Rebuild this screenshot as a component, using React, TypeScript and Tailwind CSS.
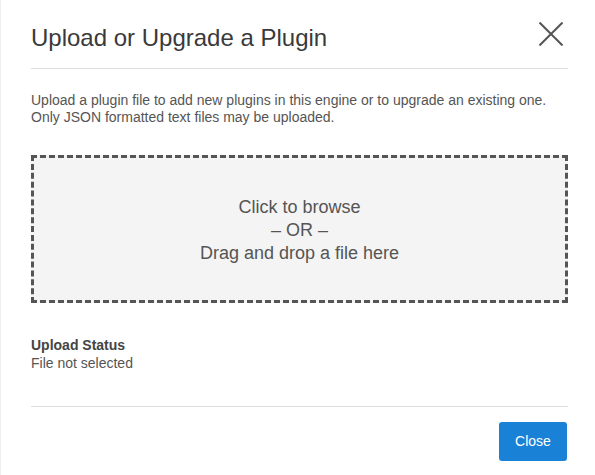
export default function App() {
  return (
    <div className="h-[475px] w-full border-l border-[#eeeeee] bg-white pl-[30px] pr-[27px] font-['Liberation_Sans',Arial,sans-serif]">
      {/* header */}
      <div className="flex items-start justify-between border-b border-[#dddddd] pt-[23px] pb-[16px]">
        <h1 className="text-[24px] leading-[29px] text-[#3a3a3a]">Upload or Upgrade a Plugin</h1>
        <button className="mr-[5px] mt-[-1px] text-[#555555]" aria-label="Close">
          <svg width="24" height="24" viewBox="0 0 24 24" fill="none" stroke="currentColor" strokeWidth="2">
            <line x1="0.5" y1="0.5" x2="23.5" y2="23.5" />
            <line x1="23.5" y1="0.5" x2="0.5" y2="23.5" />
          </svg>
        </button>
      </div>

      <p className="mt-[23px] text-[14px] leading-[17px] text-[#555555]">
        Upload a plugin file to add new plugins in this engine or to upgrade an existing one.
        <br />
        Only JSON formatted text files may be uploaded.
      </p>

      {/* drop zone */}
      <div className="mt-[29px] flex h-[148px] cursor-pointer flex-col items-center justify-center border-[3px] border-dashed border-[#555555] bg-[#f4f4f4] pt-[3px] text-center text-[18px] leading-[23px] text-[#555555]">
        <span>Click to browse</span>
        <span>– OR –</span>
        <span>Drag and drop a file here</span>
      </div>

      <div className="mt-[33px] text-[14px] leading-[18px] text-[#555555]">
        <div className="font-bold text-[#444444]">Upload Status</div>
        <div>File not selected</div>
      </div>

      <div className="mt-[34px] flex justify-end border-t border-[#dddddd] pt-[15px]">
        <button className="mr-[1px] h-[39px] w-[68px] rounded-[3px] bg-[#1a82d6] text-[14px] text-white">
          Close
        </button>
      </div>
    </div>
  );
}
